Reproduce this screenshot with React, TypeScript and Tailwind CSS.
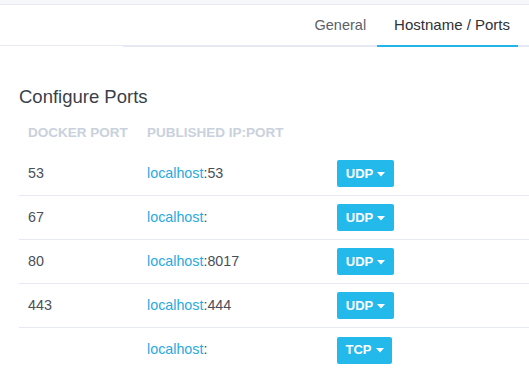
import React from "react";

type PortRow = {
  docker: string;
  published: string;
  protocol: "UDP" | "TCP";
};

const rows: PortRow[] = [
  { docker: "53", published: "53", protocol: "UDP" },
  { docker: "67", published: "", protocol: "UDP" },
  { docker: "80", published: "8017", protocol: "UDP" },
  { docker: "443", published: "444", protocol: "UDP" },
  { docker: "", published: "", protocol: "TCP" },
];

const Caret = () => (
  <svg width="8" height="5" viewBox="0 0 8 5" className="ml-[4px] mt-[1px]">
    <path d="M0 0 L8 0 L4 4.5 Z" fill="white" />
  </svg>
);

const App: React.FC = () => {
  return (
    <div
      className="w-[529px] h-[380px] overflow-hidden bg-white text-[#4a4f57]"
      style={{ fontFamily: "'Liberation Sans', Arial, sans-serif" }}
    >
      <div className="h-[5px] bg-[#f6f7fa] border-b border-[#e8eaf0]" />

      <div className="relative h-[41px] border-b border-[#e6e9ef]">
        <div className="absolute left-[123px] right-0 bottom-[-2px] h-[2px] bg-[#e4e9f3]" />
        <div className="flex justify-end h-full pr-[11px]">
          <div className="flex items-center pl-[12px] pr-[11px] text-[14.5px] text-[#5a5f68] pt-[1px]">
            General
          </div>
          <div className="relative flex items-center pl-[17px] pr-[8px] text-[15px] text-[#2d3138] pt-[1px]">
            Hostname / Ports
            <div className="absolute left-0 right-0 bottom-[-2px] h-[2px] bg-[#22b6e8]" />
          </div>
        </div>
      </div>

      <div className="pl-[19px] pt-[40px]">
        <h2 className="text-[18.5px] leading-[22px] text-[#3a3f47]">Configure Ports</h2>

        <div className="mt-[14px] flex text-[13.5px] font-bold text-[#c9d1dd] h-[22px] items-center">
          <div className="w-[119px] pl-[9px]">DOCKER PORT</div>
          <div className="pl-[9px]">PUBLISHED IP:PORT</div>
        </div>

        <div className="mt-[8px]">
          {rows.map((r, i) => (
            <div
              key={i}
              className={
                "flex items-center h-[44px] text-[14.3px] " +
                (i < rows.length - 1 ? "border-b border-[#e6e9ef]" : "")
              }
            >
              <div className="w-[119px] pl-[9px] text-[#4a4f57]">{r.docker}</div>
              <div className="w-[190px] pl-[9px]">
                <span className="text-[#29a9e0]">localhost</span>
                <span className="text-[#4a4f57]">:{r.published}</span>
              </div>
              <div className="pl-[9px]">
                <button
                  className={
                    "flex items-center justify-center h-[27px] rounded-[2px] bg-[#23b9eb] text-white font-bold text-[13px] " +
                    (r.protocol === "UDP" ? "w-[57px]" : "w-[55px]")
                  }
                >
                  {r.protocol}
                  <Caret />
                </button>
              </div>
            </div>
          ))}
        </div>
      </div>
    </div>
  );
};

export default App;
